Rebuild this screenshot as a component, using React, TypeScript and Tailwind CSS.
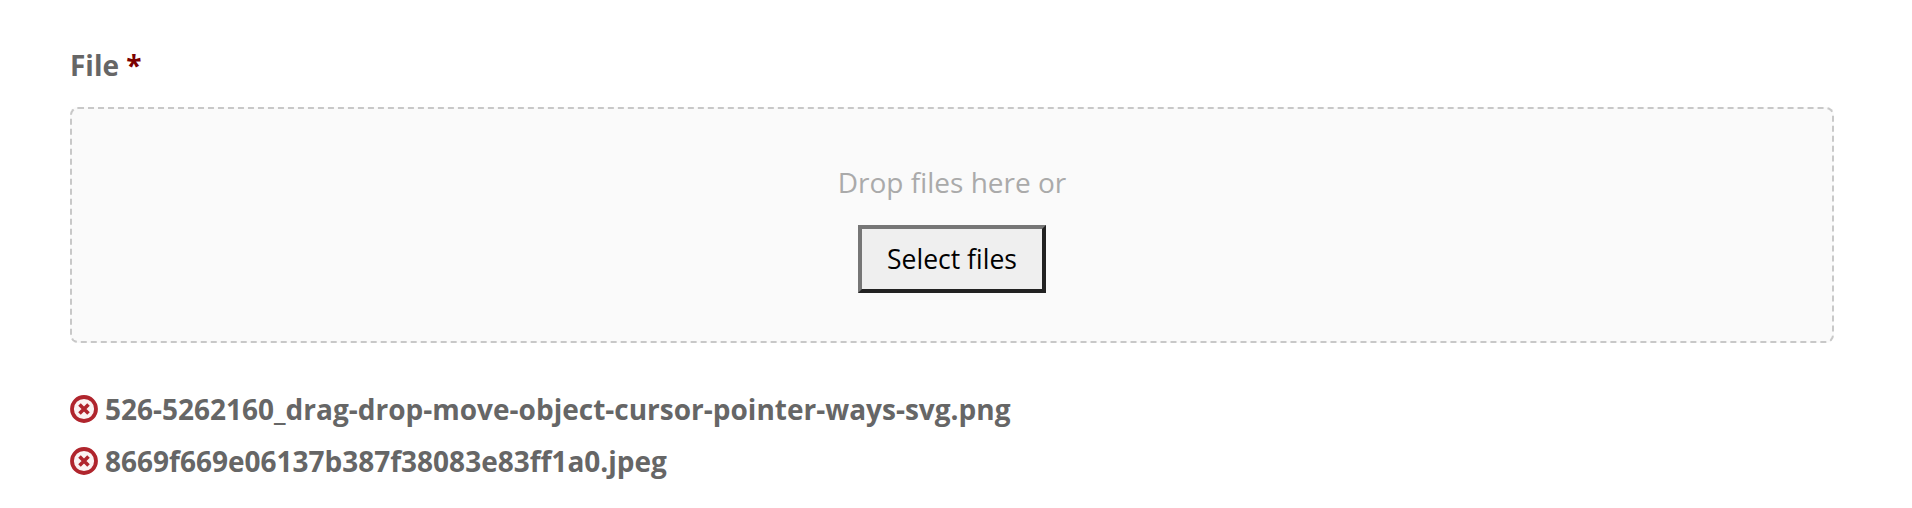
import React from 'react';

const RemoveIcon = () => (
  <svg width="28" height="28" viewBox="0 0 28 28" className="shrink-0">
    <circle cx="14" cy="14" r="12" fill="#fbf3f3" stroke="#b0252d" strokeWidth="3.8" />
    <path d="M9.5 9.5 L18.5 18.5 M18.5 9.5 L9.5 18.5" stroke="#b0252d" strokeWidth="3.6" />
  </svg>
);

const files = [
  '526-5262160_drag-drop-move-object-cursor-pointer-ways-svg.png',
  '8669f669e06137b387f38083e83ff1a0.jpeg'
];

const App: React.FC = () => {
  return (
    <div className="w-[1912px] h-[508px] bg-white overflow-hidden pl-[70px] pr-[78px] pt-[46px] font-['Open_Sans',sans-serif]">
      <div className="text-[28px] leading-[38px] font-bold text-[#666666]">
        File <span className="text-[#7b0000]">*</span>
      </div>
      <div className="mt-[23px] h-[236px] bg-[#fafafa] border-2 border-dashed border-[#c8c8c8] rounded-[8px] flex flex-col items-center pt-[54px]">
        <div className="text-[28px] leading-[38px] text-[#aaaaaa]">Drop files here or</div>
        <button className="mt-[24px] w-[188px] h-[68px] pt-[2px] bg-[#efefef] border-4 border-t-[#767676] border-l-[#767676] border-r-[#222222] border-b-[#222222] text-[26.5px] text-black">
          Select files
        </button>
      </div>
      <div className="mt-[47px] flex flex-col gap-[14px]">
        {files.map(f => (
          <div key={f} className="flex items-center gap-[7px] h-[38px] text-[28px] font-bold text-[#666666]">
            <RemoveIcon />
            <span>{f}</span>
          </div>
        ))}
      </div>
    </div>
  );
};

export default App;
